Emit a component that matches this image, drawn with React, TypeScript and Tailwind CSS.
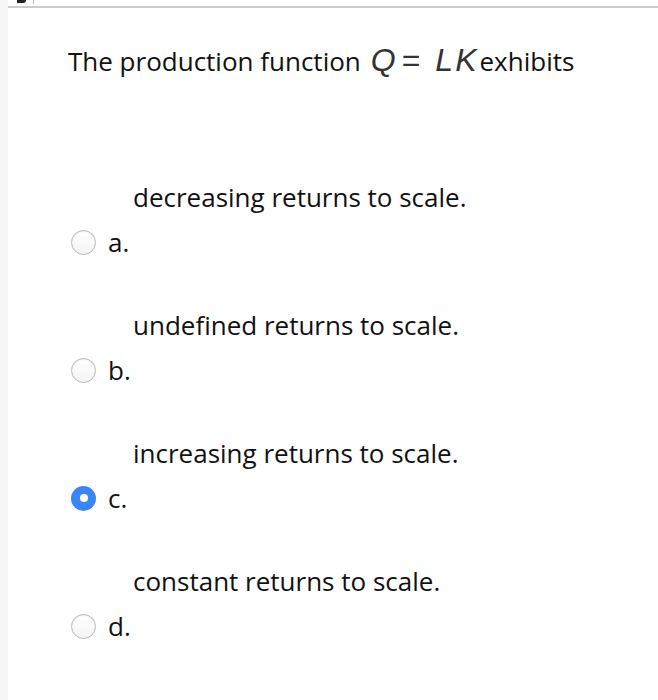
import React from 'react';

const options = [
  { letter: 'a.', text: 'decreasing returns to scale.', checked: false },
  { letter: 'b.', text: 'undefined returns to scale.', checked: false },
  { letter: 'c.', text: 'increasing returns to scale.', checked: true },
  { letter: 'd.', text: 'constant returns to scale.', checked: false },
];

function Radio({ checked }: { checked: boolean }) {
  if (checked) {
    return (
      <span className="flex h-[25px] w-[25px] items-center justify-center rounded-full bg-[#3b86f7]">
        <span className="h-[8px] w-[8px] rounded-full bg-white" />
      </span>
    );
  }
  return (
    <span className="h-[25px] w-[25px] rounded-full border border-[#b9b9b9] bg-gradient-to-b from-white to-[#f4f4f4] shadow-[inset_0_1px_1px_rgba(0,0,0,0.05)]" />
  );
}

export default function App() {
  return (
    <div className="flex min-h-[700px] bg-white font-['Open_Sans',sans-serif] text-[#111]">
      <div className="w-[8px] shrink-0 bg-[#f7f7f7]" />
      <div className="flex-1">
        <div className="relative h-[6px]">
          <span className="absolute left-[9px] top-0 h-[3px] w-[9px] rounded-br-sm bg-[#222]" />
          <span className="absolute left-[25px] top-0 h-[4px] w-[1px] bg-[#bbb]" />
        </div>
        <div className="h-[2px] bg-[#cccccc]" />

        <p className="mt-[32px] flex items-baseline pl-[60px] text-[26px] leading-[40px]">
          <span>The production function</span>
          <span className="ml-[10px] font-['Liberation_Sans',sans-serif] text-[32px] text-[#333]">
            <i>Q</i>
            <span className="ml-[6px]">=</span>
            <i className="ml-[15px]">L</i>
            <i className="ml-[2px]">K</i>
          </span>
          <span className="ml-[3px]">exhibits</span>
        </p>

        <div className="mt-[96px] flex flex-col gap-[45px]">
          {options.map((o) => (
            <div key={o.letter} className="flex flex-col">
              <p className="pl-[125px] text-[26px] leading-[40px]">{o.text}</p>
              <label className="mt-[7px] flex items-center gap-[12px] pl-[63px] text-[26px] leading-[36px]">
                <Radio checked={o.checked} />
                <span>{o.letter}</span>
              </label>
            </div>
          ))}
        </div>
      </div>
    </div>
  );
}
